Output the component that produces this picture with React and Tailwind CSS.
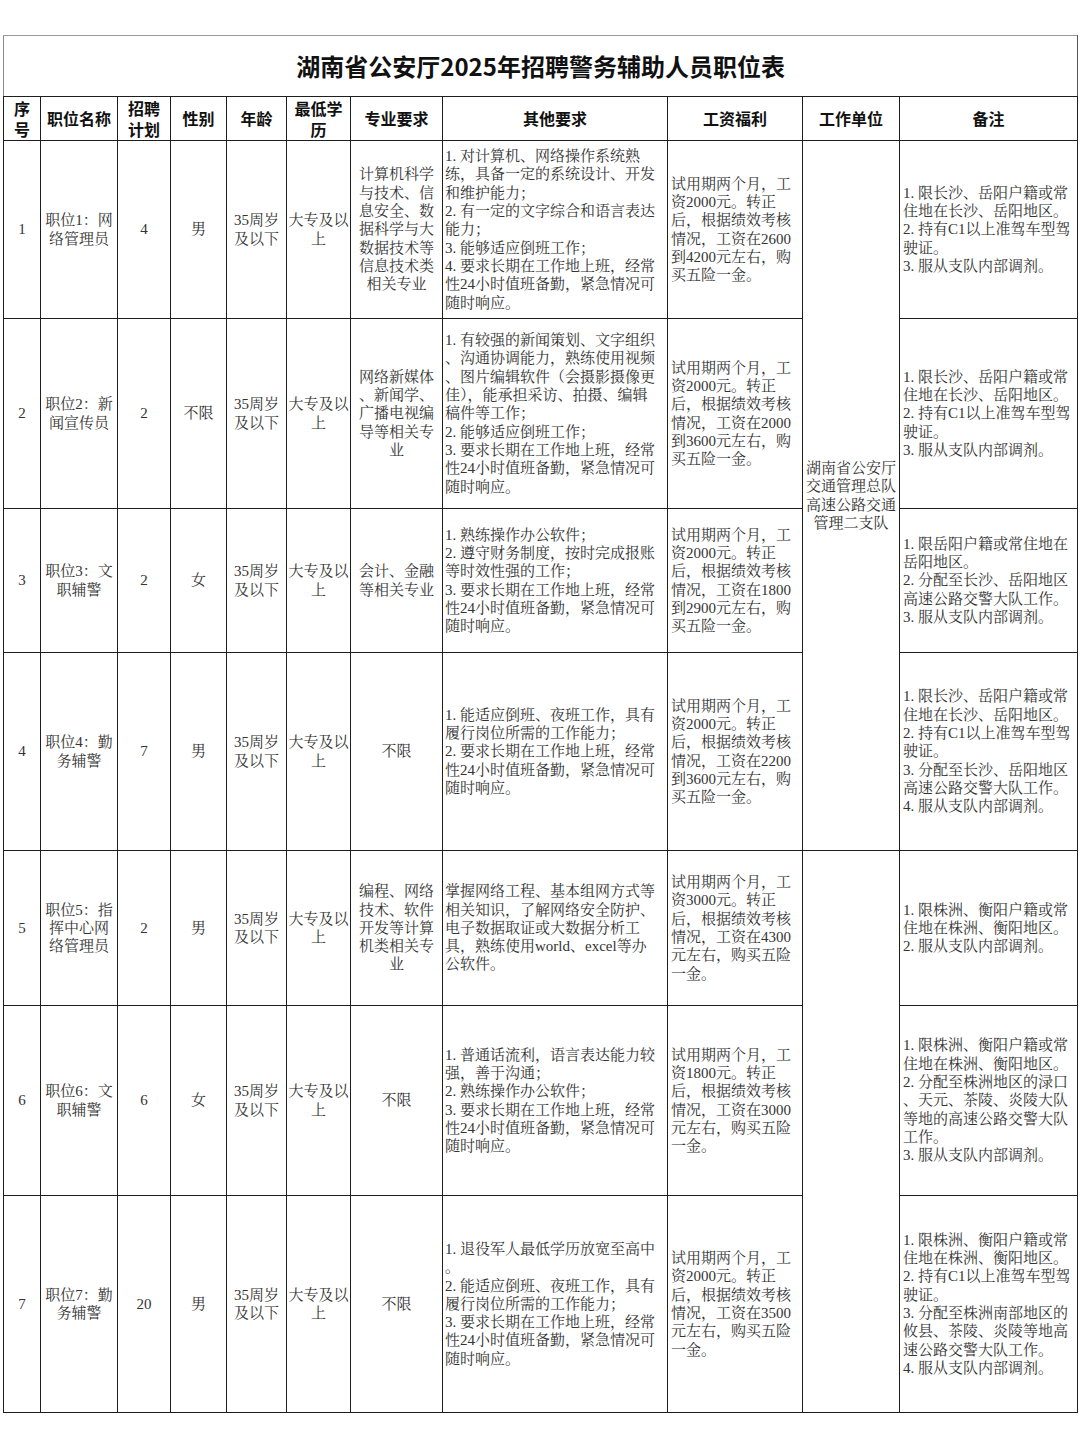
import React from "react";

const body = "font-['Liberation_Serif','Noto_Serif_CJK_SC','Noto_Sans_CJK_SC',serif] text-[15px] leading-[18.3px] text-[#333]";
const head = "font-['Noto_Sans_CJK_SC','Liberation_Sans',sans-serif] font-bold text-[16px] leading-[21px] text-[#111]";
const cell = "border-[1.5px] border-[#1e1e1e] p-0 align-middle";

const jobs = [
  {
    h: "h-[178px]",
    no: "1",
    name: ["职位1：网", "络管理员"],
    plan: "4",
    sex: "男",
    major: ["计算机科学", "与技术、信", "息安全、数", "据科学与大", "数据技术等", "信息技术类", "相关专业"],
    other: [
      "1. 对计算机、网络操作系统熟",
      "练，具备一定的系统设计、开发",
      "和维护能力；",
      "2. 有一定的文字综合和语言表达",
      "能力；",
      "3. 能够适应倒班工作；",
      "4. 要求长期在工作地上班，经常",
      "性24小时值班备勤，紧急情况可",
      "随时响应。",
    ],
    pay: ["试用期两个月，工", "资2000元。转正", "后，根据绩效考核", "情况，工资在2600", "到4200元左右，购", "买五险一金。"],
    unit: { span: 4, lines: ["湖南省公安厅", "交通管理总队", "高速公路交通", "管理二支队"] },
    note: ["1. 限长沙、岳阳户籍或常", "住地在长沙、岳阳地区。", "2. 持有C1以上准驾车型驾", "驶证。", "3. 服从支队内部调剂。"],
  },
  {
    h: "h-[190px]",
    no: "2",
    name: ["职位2：新", "闻宣传员"],
    plan: "2",
    sex: "不限",
    major: ["网络新媒体", "、新闻学、", "广播电视编", "导等相关专", "业"],
    other: [
      "1. 有较强的新闻策划、文字组织",
      "、沟通协调能力，熟练使用视频",
      "、图片编辑软件（会摄影摄像更",
      "佳），能承担采访、拍摄、编辑",
      "稿件等工作；",
      "2. 能够适应倒班工作；",
      "3. 要求长期在工作地上班，经常",
      "性24小时值班备勤，紧急情况可",
      "随时响应。",
    ],
    pay: ["试用期两个月，工", "资2000元。转正", "后，根据绩效考核", "情况，工资在2000", "到3600元左右，购", "买五险一金。"],
    note: ["1. 限长沙、岳阳户籍或常", "住地在长沙、岳阳地区。", "2. 持有C1以上准驾车型驾", "驶证。", "3. 服从支队内部调剂。"],
  },
  {
    h: "h-[144px]",
    no: "3",
    name: ["职位3：文", "职辅警"],
    plan: "2",
    sex: "女",
    major: ["会计、金融", "等相关专业"],
    other: [
      "1. 熟练操作办公软件；",
      "2. 遵守财务制度，按时完成报账",
      "等时效性强的工作；",
      "3. 要求长期在工作地上班，经常",
      "性24小时值班备勤，紧急情况可",
      "随时响应。",
    ],
    pay: ["试用期两个月，工", "资2000元。转正", "后，根据绩效考核", "情况，工资在1800", "到2900元左右，购", "买五险一金。"],
    note: ["1. 限岳阳户籍或常住地在", "岳阳地区。", "2. 分配至长沙、岳阳地区", "高速公路交警大队工作。", "3. 服从支队内部调剂。"],
  },
  {
    h: "h-[198px]",
    no: "4",
    name: ["职位4：勤", "务辅警"],
    plan: "7",
    sex: "男",
    major: ["不限"],
    other: [
      "1. 能适应倒班、夜班工作，具有",
      "履行岗位所需的工作能力；",
      "2. 要求长期在工作地上班，经常",
      "性24小时值班备勤，紧急情况可",
      "随时响应。",
    ],
    pay: ["试用期两个月，工", "资2000元。转正", "后，根据绩效考核", "情况，工资在2200", "到3600元左右，购", "买五险一金。"],
    note: [
      "1. 限长沙、岳阳户籍或常",
      "住地在长沙、岳阳地区。",
      "2. 持有C1以上准驾车型驾",
      "驶证。",
      "3. 分配至长沙、岳阳地区",
      "高速公路交警大队工作。",
      "4. 服从支队内部调剂。",
    ],
  },
  {
    h: "h-[155px]",
    no: "5",
    name: ["职位5：指", "挥中心网", "络管理员"],
    plan: "2",
    sex: "男",
    major: ["编程、网络", "技术、软件", "开发等计算", "机类相关专", "业"],
    other: [
      "掌握网络工程、基本组网方式等",
      "相关知识，了解网络安全防护、",
      "电子数据取证或大数据分析工",
      "具，熟练使用world、excel等办",
      "公软件。",
    ],
    pay: ["试用期两个月，工", "资3000元。转正", "后，根据绩效考核", "情况，工资在4300", "元左右，购买五险", "一金。"],
    unit: { span: 3, lines: [] },
    note: ["1. 限株洲、衡阳户籍或常", "住地在株洲、衡阳地区。", "2. 服从支队内部调剂。"],
  },
  {
    h: "h-[190px]",
    no: "6",
    name: ["职位6：文", "职辅警"],
    plan: "6",
    sex: "女",
    major: ["不限"],
    other: [
      "1. 普通话流利，语言表达能力较",
      "强，善于沟通；",
      "2. 熟练操作办公软件；",
      "3. 要求长期在工作地上班，经常",
      "性24小时值班备勤，紧急情况可",
      "随时响应。",
    ],
    pay: ["试用期两个月，工", "资1800元。转正", "后，根据绩效考核", "情况，工资在3000", "元左右，购买五险", "一金。"],
    note: [
      "1. 限株洲、衡阳户籍或常",
      "住地在株洲、衡阳地区。",
      "2. 分配至株洲地区的渌口",
      "、天元、茶陵、炎陵大队",
      "等地的高速公路交警大队",
      "工作。",
      "3. 服从支队内部调剂。",
    ],
  },
  {
    h: "h-[217px]",
    no: "7",
    name: ["职位7：勤", "务辅警"],
    plan: "20",
    sex: "男",
    major: ["不限"],
    other: [
      "1. 退役军人最低学历放宽至高中",
      "。",
      "2. 能适应倒班、夜班工作，具有",
      "履行岗位所需的工作能力；",
      "3. 要求长期在工作地上班，经常",
      "性24小时值班备勤，紧急情况可",
      "随时响应。",
    ],
    pay: ["试用期两个月，工", "资2000元。转正", "后，根据绩效考核", "情况，工资在3500", "元左右，购买五险", "一金。"],
    note: [
      "1. 限株洲、衡阳户籍或常",
      "住地在株洲、衡阳地区。",
      "2. 持有C1以上准驾车型驾",
      "驶证。",
      "3. 分配至株洲南部地区的",
      "攸县、茶陵、炎陵等地高",
      "速公路交警大队工作。",
      "4. 服从支队内部调剂。",
    ],
  },
];

const Lines = ({ lines }) => (
  <>
    {lines.map((l, i) => (
      <div key={i} className="whitespace-nowrap">
        {l}
      </div>
    ))}
  </>
);

const headers = [
  ["序", "号"],
  ["职位名称"],
  ["招聘", "计划"],
  ["性别"],
  ["年龄"],
  ["最低学", "历"],
  ["专业要求"],
  ["其他要求"],
  ["工资福利"],
  ["工作单位"],
  ["备注"],
];

export default function App() {
  return (
    <div className="min-h-[1441px] w-[1080px] bg-white pt-[35px] pl-[3px]">
      <table className="table-fixed border-collapse w-[1074px]">
        <colgroup>
          <col className="w-[37px]" />
          <col className="w-[77px]" />
          <col className="w-[53px]" />
          <col className="w-[56px]" />
          <col className="w-[60px]" />
          <col className="w-[64px]" />
          <col className="w-[92px]" />
          <col className="w-[225px]" />
          <col className="w-[135px]" />
          <col className="w-[97px]" />
          <col className="w-[178px]" />
        </colgroup>
        <tbody>
          {/* Title */}
          <tr className="h-[61px]">
            <td
              colSpan={11}
              className="border-t border-l border-r border-b-[1.5px] border-t-[#9a9a9a] border-l-[#8a8a8a] border-r-[#555] border-b-[#1e1e1e] text-center align-middle font-['Noto_Sans_CJK_SC','Liberation_Sans',sans-serif] font-bold text-[24px] text-[#111]"
            >
              湖南省公安厅2025年招聘警务辅助人员职位表
            </td>
          </tr>

          {/* Header */}
          <tr className="h-[44px]">
            {headers.map((h, i) => (
              <td key={i} className={`${cell} ${head} text-center`}>
                <Lines lines={h} />
              </td>
            ))}
          </tr>

          {jobs.map((j) => (
            <tr key={j.no} className={j.h}>
              <td className={`${cell} ${body} text-center`}>{j.no}</td>
              <td className={`${cell} ${body} text-center`}>
                <Lines lines={j.name} />
              </td>
              <td className={`${cell} ${body} text-center`}>{j.plan}</td>
              <td className={`${cell} ${body} text-center`}>{j.sex}</td>
              <td className={`${cell} ${body} text-center`}>
                <Lines lines={["35周岁", "及以下"]} />
              </td>
              <td className={`${cell} ${body} text-center`}>
                <Lines lines={["大专及以", "上"]} />
              </td>
              <td className={`${cell} ${body} text-center`}>
                <Lines lines={j.major} />
              </td>
              <td className={`${cell} ${body} text-left pl-[2px]`}>
                <Lines lines={j.other} />
              </td>
              <td className={`${cell} ${body} text-left pl-[3px]`}>
                <Lines lines={j.pay} />
              </td>
              {j.unit && (
                <td rowSpan={j.unit.span} className={`${cell} ${body} text-center`}>
                  <Lines lines={j.unit.lines} />
                </td>
              )}
              <td className={`${cell} ${body} text-left pl-[3px]`}>
                <Lines lines={j.note} />
              </td>
            </tr>
          ))}
        </tbody>
      </table>
    </div>
  );
}
